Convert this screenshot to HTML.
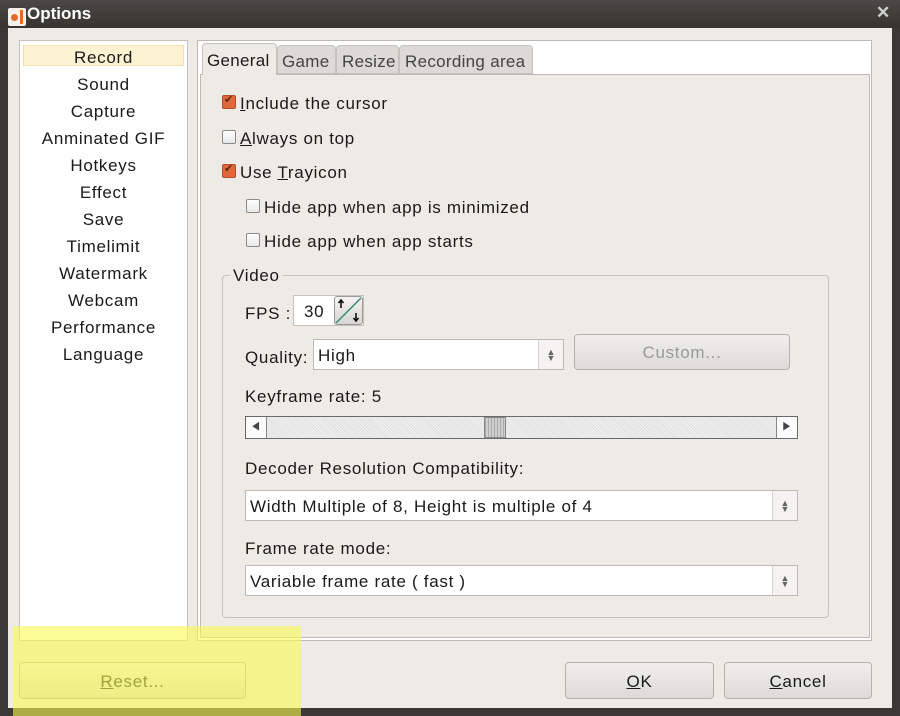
<!DOCTYPE html>
<html><head><meta charset="utf-8"><style>
*{box-sizing:border-box;margin:0;padding:0}
body{width:900px;height:716px;overflow:hidden;background:#3a3935;font-family:"Liberation Sans","NanumGothic",sans-serif;font-size:17px;letter-spacing:0.7px;color:#1a1a1a;position:relative}
.a{position:absolute}
.t{position:absolute;white-space:nowrap;line-height:20px}
.cb{position:absolute;width:14px;height:14px;border:1px solid #8a8a8a;border-radius:2px;background:linear-gradient(#fff,#e8e8e8)}
.cb.on{background:#e0673a;border-color:#b0502c}
.cb.on::after{content:"✔";position:absolute;left:1px;top:-3px;font-size:11px;color:#5a2a10}
.combo{position:absolute;background:#fff;border:1px solid #bdbab5}
.combo .ar{position:absolute;right:0;top:0;bottom:0;width:25px;border-left:1px solid #d6d3ce;background:#f4f3f1;color:#666;font-size:9px;line-height:6px;text-align:center;padding-top:9px;letter-spacing:0}
.btn{position:absolute;border:1px solid #b5b2ad;border-radius:4px;background:linear-gradient(#f0efed,#dcdbd8);text-align:center;line-height:38px}
u{text-decoration:underline}
</style></head><body>
<div class="a" style="left:0;top:0;width:900px;height:28px;background:linear-gradient(#4a4945,#35342f)"></div>
<div class="a" style="left:8px;top:8px;width:18px;height:18px;background:#f3f1ee;border-radius:2px"></div>
<div class="a" style="left:11px;top:14px;width:7px;height:7px;border-radius:50%;background:#e46a2c"></div>
<div class="a" style="left:20px;top:10px;width:3px;height:14px;background:#e46a2c"></div>
<div class="t" style="left:27px;top:4px;color:#fff;font-weight:bold;font-size:17px;letter-spacing:0">Options</div>
<div class="t" style="left:876px;top:3px;color:#d0d0d0;font-weight:bold;font-size:17px">✕</div>
<div class="a" style="left:8px;top:28px;width:884px;height:680px;background:#eeebe6"></div>
<div class="a" style="left:19px;top:40px;width:169px;height:601px;background:#fff;border:1px solid #c5c2bd"></div>
<div class="a" style="left:23px;top:45px;width:161px;height:21px;background:#fdf3d3;border:1px solid #f0dfb0"></div>
<div class="t" style="left:19px;top:44px;width:169px;text-align:center;line-height:27px">Record<br>Sound<br>Capture<br>Anminated GIF<br>Hotkeys<br>Effect<br>Save<br>Timelimit<br>Watermark<br>Webcam<br>Performance<br>Language</div>
<div class="a" style="left:197px;top:40px;width:675px;height:601px;background:#fff;border:1px solid #bdbab5"></div>
<div class="a" style="left:200px;top:74px;width:670px;height:564px;background:#eeebe6;border:1px solid #bdbab5"></div>
<div class="a" style="left:202px;top:43px;width:75px;height:32px;background:#eeebe6;border:1px solid #c5c2bd;border-bottom:none;border-radius:4px 4px 0 0"></div>
<div class="t" style="left:207px;top:51px;letter-spacing:0.3px">General</div>
<div class="a" style="left:277px;top:45px;width:59px;height:29px;background:#dcdad6;border:1px solid #c5c2bd;border-radius:4px 4px 0 0"></div>
<div class="t" style="left:282px;top:52px;color:#444;letter-spacing:0.3px">Game</div>
<div class="a" style="left:336px;top:45px;width:63px;height:29px;background:#dcdad6;border:1px solid #c5c2bd;border-radius:4px 4px 0 0"></div>
<div class="t" style="left:342px;top:52px;color:#444;letter-spacing:0.3px">Resize</div>
<div class="a" style="left:399px;top:45px;width:134px;height:29px;background:#dcdad6;border:1px solid #c5c2bd;border-radius:4px 4px 0 0"></div>
<div class="t" style="left:405px;top:52px;color:#444;letter-spacing:0.3px">Recording area</div>
<div class="cb on" style="left:222px;top:95px"></div><div class="t" style="left:240px;top:94px"><u>I</u>nclude the cursor</div>
<div class="cb" style="left:222px;top:130px"></div><div class="t" style="left:240px;top:129px"><u>A</u>lways on top</div>
<div class="cb on" style="left:222px;top:164px"></div><div class="t" style="left:240px;top:163px">Use <u>T</u>rayicon</div>
<div class="cb" style="left:246px;top:199px"></div><div class="t" style="left:264px;top:198px">Hide app when app is minimized</div>
<div class="cb" style="left:246px;top:233px"></div><div class="t" style="left:264px;top:232px">Hide app when app starts</div>
<div class="a" style="left:222px;top:275px;width:607px;height:343px;border:1px solid #c5c2bd;border-radius:4px"></div>
<div class="t" style="left:230px;top:266px;background:#eeebe6;padding:0 3px">Video</div>
<div class="t" style="left:245px;top:304px">FPS :</div>
<div class="a" style="left:293px;top:295px;width:71px;height:31px;background:#fff;border:1px solid #c5c2bd"></div>
<div class="t" style="left:304px;top:302px">30</div>
<div class="a" style="left:334px;top:296px;width:29px;height:29px;border:1px solid #999;border-radius:3px;background:linear-gradient(#f4f3f0,#d8d6d2)"></div>
<svg class="a" style="left:334px;top:296px" width="29" height="29"><line x1="2" y1="27" x2="27" y2="2" stroke="#3a8a78" stroke-width="1.5"/><path d="M7 12V4M4.5 7L7 4L9.5 7" stroke="#111" stroke-width="1.6" fill="none"/><path d="M22 17V25M19.5 22L22 25L24.5 22" stroke="#111" stroke-width="1.6" fill="none"/></svg>
<div class="t" style="left:245px;top:348px">Quality:</div>
<div class="combo" style="left:313px;top:339px;width:251px;height:31px"><div class="t" style="left:4px;top:6px">High</div><div class="ar">▲<br>▼</div></div>
<div class="btn" style="left:574px;top:334px;width:216px;height:36px;color:#999;line-height:36px">Custom...</div>
<div class="t" style="left:245px;top:387px">Keyframe rate: 5</div>
<div class="a" style="left:245px;top:416px;width:553px;height:23px;border:1px solid #6a6a6a;background:repeating-linear-gradient(45deg,#ddd 0 1px,#f4f4f4 1px 2px)"></div>
<div class="a" style="left:246px;top:417px;width:21px;height:21px;background:#fafafa;border-right:1px solid #888;text-align:center;font-size:11px;line-height:21px;color:#444">◀</div>
<div class="a" style="left:776px;top:417px;width:21px;height:21px;background:#fafafa;border-left:1px solid #888;text-align:center;font-size:11px;line-height:21px;color:#444">▶</div>
<div class="a" style="left:484px;top:417px;width:22px;height:21px;background:repeating-linear-gradient(90deg,#aaa 0 1px,#cfcfcf 1px 3px);border:1px solid #888"></div>
<div class="t" style="left:245px;top:459px">Decoder Resolution Compatibility:</div>
<div class="combo" style="left:245px;top:490px;width:553px;height:31px"><div class="t" style="left:4px;top:6px">Width Multiple of 8, Height is multiple of 4</div><div class="ar">▲<br>▼</div></div>
<div class="t" style="left:245px;top:539px">Frame rate mode:</div>
<div class="combo" style="left:245px;top:565px;width:553px;height:31px"><div class="t" style="left:4px;top:6px">Variable frame rate ( fast )</div><div class="ar">▲<br>▼</div></div>
<div class="btn" style="left:19px;top:662px;width:227px;height:37px"><u>R</u>eset...</div>
<div class="btn" style="left:565px;top:662px;width:149px;height:37px"><u>O</u>K</div>
<div class="btn" style="left:724px;top:662px;width:148px;height:37px"><u>C</u>ancel</div>
<div class="a" style="left:13px;top:626px;width:288px;height:90px;background:rgba(250,250,80,0.6)"></div>
</body></html>
